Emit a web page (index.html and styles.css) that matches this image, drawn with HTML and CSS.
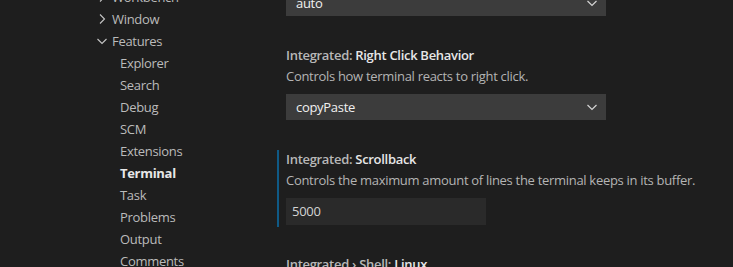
FILE: index.html
```html
<!DOCTYPE html>
<html lang="en">
<head>
  <meta charset="UTF-8" />
  <title>Settings</title>
  <link rel="stylesheet" href="styles.css">
</head>
<body>
  <div class="page">
    <div class="tree">
      <div class="row group"><svg class="chev" viewBox="0 0 16 16"><path d="M6 3.5l4.5 4.5L6 12.5" /></svg>Workbench</div>
      <div class="row group"><svg class="chev" viewBox="0 0 16 16"><path d="M6 3.5l4.5 4.5L6 12.5" /></svg>Window</div>
      <div class="row group"><svg class="chev" viewBox="0 0 16 16"><path d="M3.5 6l4.5 4.5L12.5 6" /></svg>Features</div>
      <div class="row child">Explorer</div>
      <div class="row child">Search</div>
      <div class="row child">Debug</div>
      <div class="row child">SCM</div>
      <div class="row child">Extensions</div>
      <div class="row child active">Terminal</div>
      <div class="row child">Task</div>
      <div class="row child">Problems</div>
      <div class="row child">Output</div>
      <div class="row child">Comments</div>
    </div>

    <div class="settings">
      <div class="setting first">
        <div class="select">auto<svg class="caret" viewBox="0 0 16 16"><path d="M3.5 6l4.5 4.5L12.5 6" /></svg></div>
      </div>

      <div class="setting">
        <div class="title"><span class="cat">Integrated: </span>Right Click Behavior</div>
        <div class="desc">Controls how terminal reacts to right click.</div>
        <div class="select">copyPaste<svg class="caret" viewBox="0 0 16 16"><path d="M3.5 6l4.5 4.5L12.5 6" /></svg></div>
      </div>

      <div class="setting focused">
        <div class="title"><span class="cat">Integrated: </span>Scrollback</div>
        <div class="desc">Controls the maximum amount of lines the terminal keeps in its buffer.</div>
        <div class="input">5000</div>
      </div>

      <div class="setting">
        <div class="title"><span class="cat">Integrated › Shell: </span>Linux</div>
      </div>
    </div>
  </div>
</body>
</html>
```

FILE: styles.css
```css
body {
  margin: 0;
  background: #1e1e1e;
  font-family: 'Open Sans', 'Noto Sans', sans-serif;
  font-size: 13px;
  letter-spacing: -0.3px;
  color: #cccccc;
  overflow: hidden;
}

.page {
  display: flex;
  height: 267px;
  overflow: hidden;
}

.tree {
  width: 277px;
  margin-top: -14px;
  flex-shrink: 0;
}

.row {
  height: 22px;
  line-height: 22px;
  color: #bbbbbb;
  white-space: nowrap;
  display: flex;
  align-items: center;
}

.group {
  padding-left: 94px;
}

.chev {
  width: 16px;
  height: 16px;
  margin-right: 2px;
  fill: none;
  stroke: #c5c5c5;
  stroke-width: 1.1;
}

.child {
  padding-left: 120px;
}

.active {
  font-weight: bold;
  color: #e7e7e7;
}

.settings {
  flex: 1;
}

.setting {
  border-left: 2px solid transparent;
  padding: 0 0 2px 7px;
  margin-bottom: 28px;
}

.setting.first {
  margin-top: -16px;
}

.setting.focused {
  border-left-color: #0f5a86;
}

.title {
  line-height: 18px;
  font-weight: 600;
  color: #e7e7e7;
}

.cat {
  color: #b8b8b8;
}

.desc {
  line-height: 24px;
  color: #b4b4b4;
  white-space: nowrap;
}

.select {
  margin-top: 6px;
  width: 304px;
  height: 26px;
  line-height: 26px;
  background: #3c3c3c;
  color: #f0f0f0;
  padding: 0 6px 0 10px;
  display: flex;
  justify-content: space-between;
  align-items: center;
}

.caret {
  width: 16px;
  height: 16px;
  fill: none;
  stroke: #d4d4d4;
  stroke-width: 1.2;
}

.input {
  margin-top: 6px;
  width: 194px;
  height: 27px;
  line-height: 27px;
  padding-left: 6px;
  background: #2a2a2a;
  color: #d4d4d4;
}
```
